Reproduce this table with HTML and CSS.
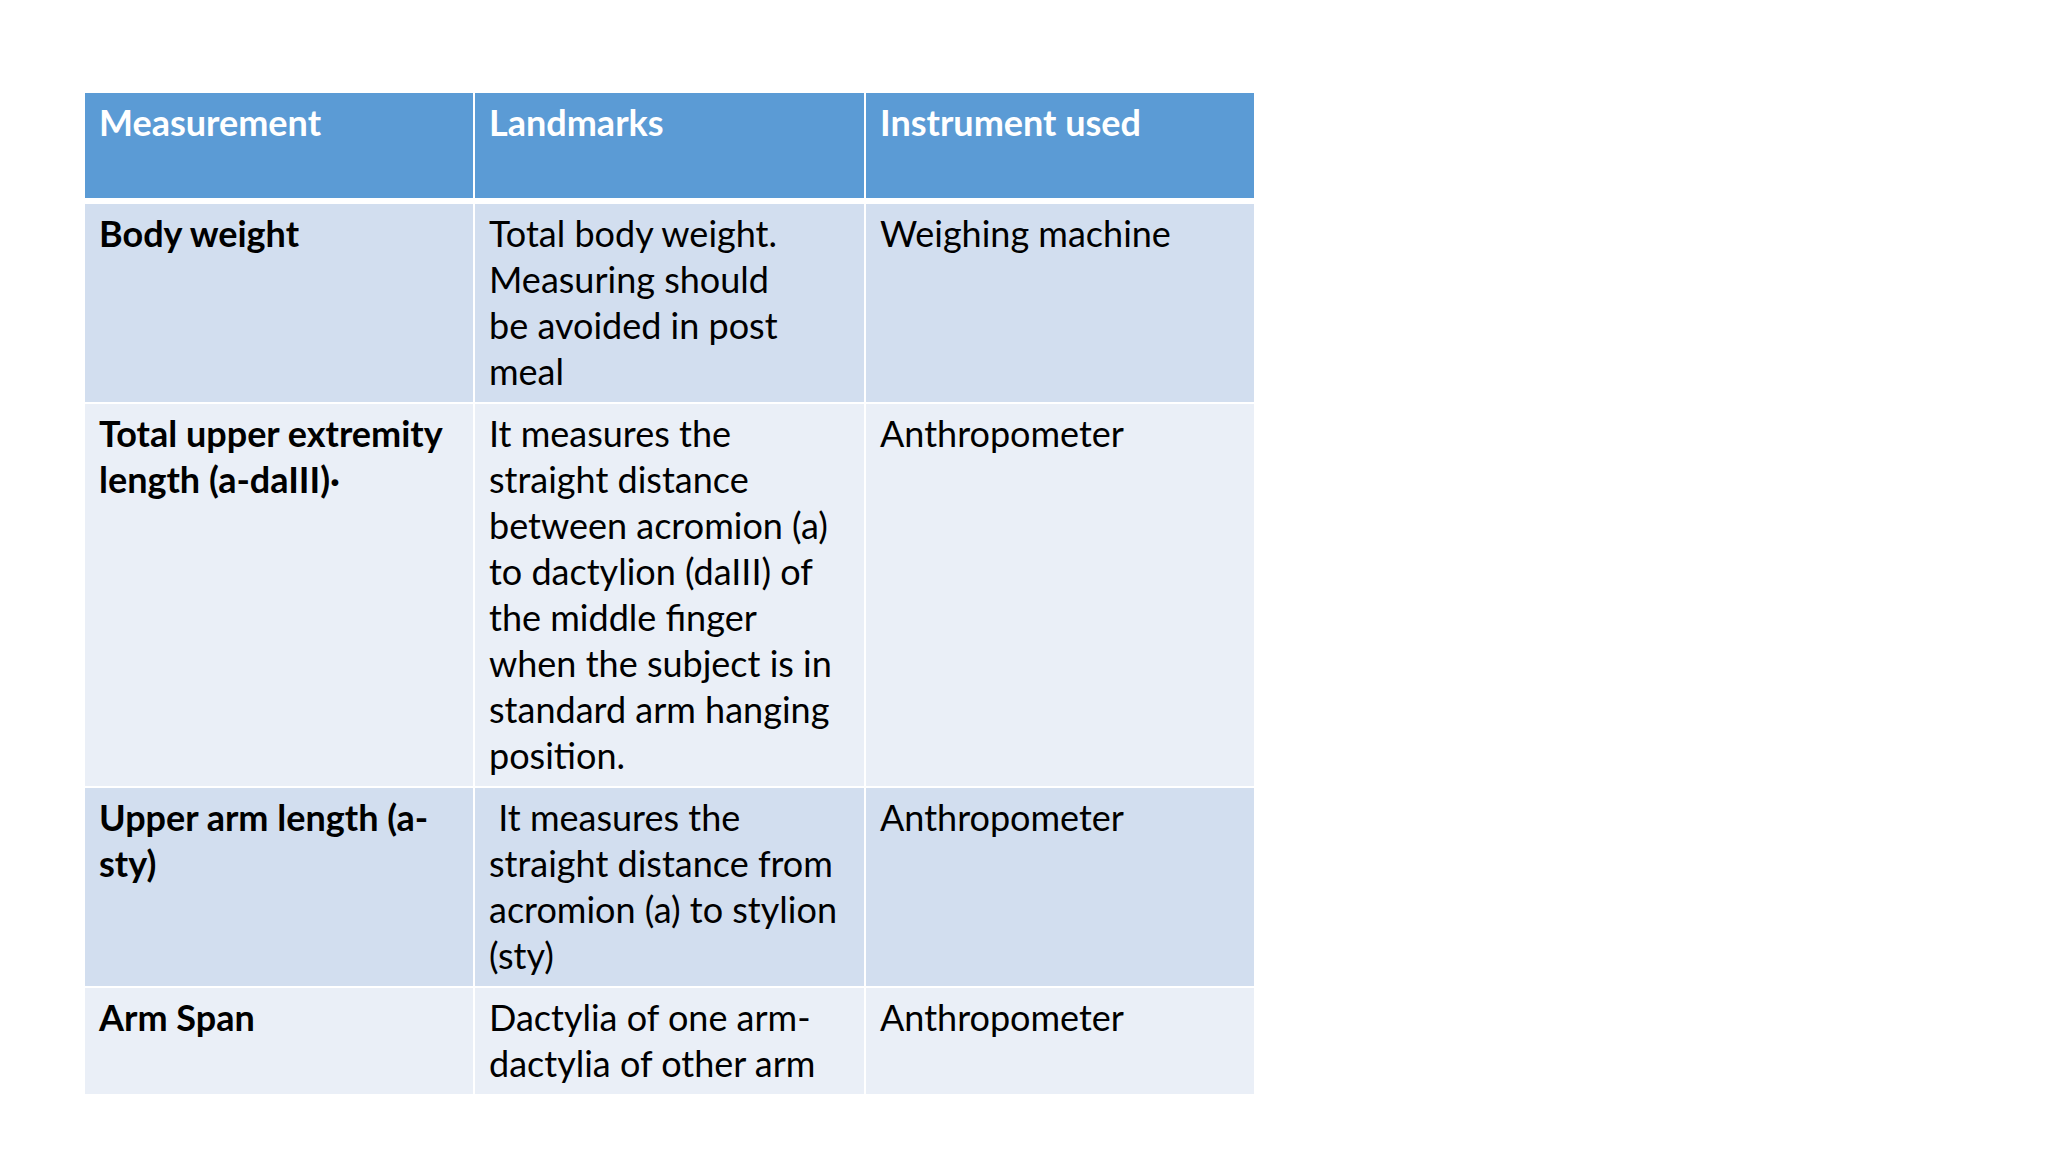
FILE: index.html
```html
<!DOCTYPE html>
<html>
<head>
<meta charset="utf-8">
<link rel="stylesheet" href="styles.css">
</head>
<body>
<main class="slide">
  <table class="grid">
    <colgroup>
      <col class="c1"><col class="c2"><col class="c3">
    </colgroup>
    <thead>
      <tr class="head">
        <th>Measurement</th>
        <th>Landmarks</th>
        <th>Instrument used</th>
      </tr>
    </thead>
    <tbody>
      <tr class="odd">
        <td class="name">Body weight</td>
        <td>Total body weight.<br>Measuring should<br>be avoided in post<br>meal</td>
        <td>Weighing machine</td>
      </tr>
      <tr class="even">
        <td class="name">Total upper extremity<br>length (a-daIII)·</td>
        <td>It measures the<br>straight distance<br>between acromion (a)<br>to dactylion (daIII) of<br>the middle finger<br>when the subject is in<br>standard arm hanging<br>position.</td>
        <td>Anthropometer</td>
      </tr>
      <tr class="odd">
        <td class="name">Upper arm length (a-<br>sty)</td>
        <td><span class="lead">&nbsp;</span>It measures the<br>straight distance from<br>acromion (a) to stylion<br>(sty)</td>
        <td>Anthropometer</td>
      </tr>
      <tr class="even last">
        <td class="name">Arm Span</td>
        <td>Dactylia of one arm-<br>dactylia of other arm</td>
        <td>Anthropometer</td>
      </tr>
    </tbody>
  </table>
</main>
</body>
</html>
```
FILE: styles.css
```css
html, body {
  margin: 0;
  padding: 0;
  background: #ffffff;
}
.slide {
  width: 2048px;
  height: 1152px;
  padding: 93px 0 0 85px;
  box-sizing: border-box;
  font-family: Lato, "Open Sans", sans-serif;
}
.grid {
  border-collapse: collapse;
  width: 1169px;
  table-layout: fixed;
  font-size: 36px;
  line-height: 46px;
  color: #000;
}
.c1 { width: 389px; }
.c2 { width: 391px; }
.c3 { width: 389px; }
.grid th, .grid td {
  text-align: left;
  vertical-align: top;
  padding: 6px 12px 8px 14px;
  border-left: 2px solid #fff;
  border-right: 2px solid #fff;
  border-top: 2px solid #fff;
  border-bottom: 2px solid #fff;
}
.grid th:first-child, .grid td:first-child { border-left: none; }
.grid th:last-child, .grid td:last-child { border-right: none; }
.head th {
  background: #5b9bd5;
  color: #ffffff;
  font-weight: 700;
  height: 91px;
  border-top: none;
  border-bottom: 6px solid #fff;
}
.odd td { background: #d2deef; }
.even td { background: #eaeff7; }
.last td { border-bottom: none; }
.name { font-weight: 700; }
```
